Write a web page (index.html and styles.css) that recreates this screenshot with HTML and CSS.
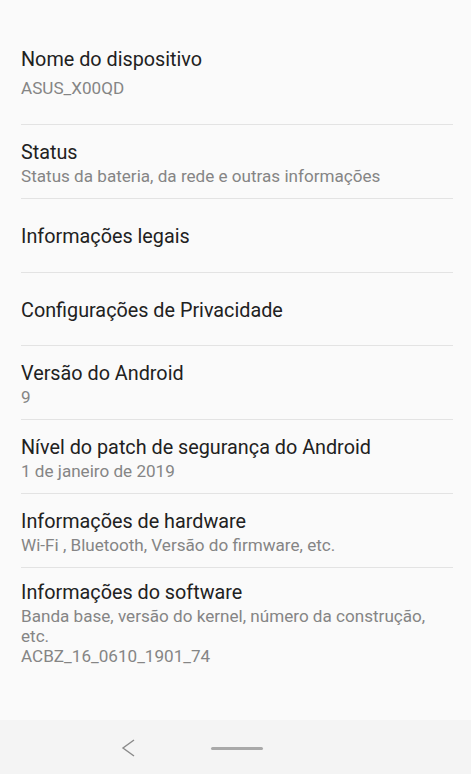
FILE: index.html
```html
<!DOCTYPE html>
<html lang="pt">
<head>
<meta charset="utf-8">
<link rel="stylesheet" href="styles.css">
</head>
<body>
<div class="screen">
  <main class="list">
    <div class="item first">
      <div class="title">Nome do dispositivo</div>
      <div class="sub">ASUS_X00QD</div>
    </div>
    <div class="item">
      <div class="title">Status</div>
      <div class="sub">Status da bateria, da rede e outras informações</div>
    </div>
    <div class="item">
      <div class="title">Informações legais</div>
    </div>
    <div class="item">
      <div class="title">Configurações de Privacidade</div>
    </div>
    <div class="item">
      <div class="title">Versão do Android</div>
      <div class="sub">9</div>
    </div>
    <div class="item">
      <div class="title">Nível do patch de segurança do Android</div>
      <div class="sub">1 de janeiro de 2019</div>
    </div>
    <div class="item">
      <div class="title">Informações de hardware</div>
      <div class="sub">Wi-Fi , Bluetooth, Versão do firmware, etc.</div>
    </div>
    <div class="item last">
      <div class="title">Informações do software</div>
      <div class="sub">Banda base, versão do kernel, número da construção, etc.<br>ACBZ_16_0610_1901_74</div>
    </div>
  </main>
  <nav class="navbar">
    <svg class="back" width="15" height="18" viewBox="0 0 15 18"><polyline points="13,1 2,9 13,17" fill="none" stroke="#8a8a8a" stroke-width="1.4"/></svg>
    <span class="home"></span>
  </nav>
</div>
</body>
</html>
```
FILE: styles.css
```css
html, body {
  margin: 0;
  padding: 0;
  background: #ffffff;
}
body {
  font-family: Roboto, "Noto Sans", sans-serif;
}
.screen {
  width: 471px;
  height: 774px;
  background: #fafafa;
  display: flex;
  flex-direction: column;
}
.list {
  flex: 1;
  padding: 0 18px 0 21px;
}
.item {
  min-height: 73.8px;
  box-sizing: border-box;
  display: flex;
  flex-direction: column;
  justify-content: center;
  padding-top: 4px;
  border-bottom: 1px solid #e3e3e3;
}
.item.first {
  min-height: 125px;
  padding-top: 48px;
  justify-content: flex-start;
}
.item.first .sub {
  margin-top: 6px;
}
.item.last {
  border-bottom: none;
  justify-content: flex-start;
  padding-top: 13px;
}
.title {
  font-size: 19.8px;
  line-height: 24px;
  color: #212121;
}
.sub {
  font-size: 17.1px;
  line-height: 20px;
  color: #858585;
  margin-top: 1px;
}
.navbar {
  height: 54px;
  background: #f4f4f4;
  display: flex;
  align-items: center;
  padding-left: 121px;
}
.back {
  margin-right: 75px;
  margin-top: 2px;
}
.home {
  width: 52px;
  height: 3px;
  border-radius: 2px;
  background: #a9a9a9;
  margin-top: 2px;
}
```
